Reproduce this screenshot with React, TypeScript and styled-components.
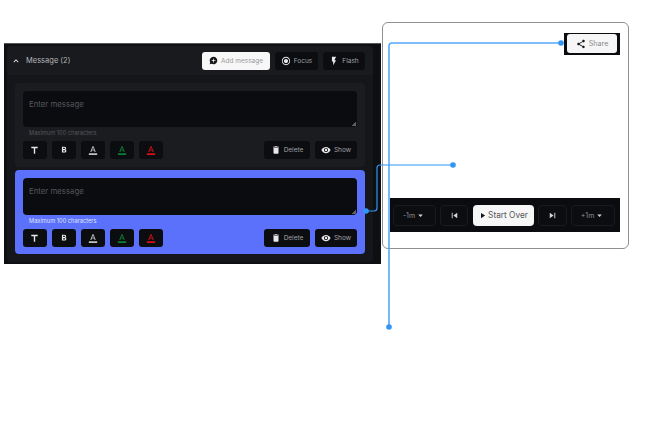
import React from 'react'
import styled, { createGlobalStyle } from 'styled-components'
import {
  MdArrowDropDown,
  MdDelete,
  MdExpandLess,
  MdFlashOn,
  MdFormatBold,
  MdFormatColorText,
  MdPlayArrow,
  MdRadioButtonChecked,
  MdShare,
  MdSkipNext,
  MdSkipPrevious,
  MdTitle,
  MdVisibility,
} from 'react-icons/md'

const GlobalStyle = createGlobalStyle`
  html, body {
    margin: 0;
    padding: 0;
    background: #fff;
    overflow: hidden;
  }
  * {
    box-sizing: border-box;
  }
`

const Page = styled.div`
  position: relative;
  width: 650px;
  height: 422px;
  padding: 22px 0 0 4px;
  display: flex;
  align-items: flex-start;
  gap: 1px;
  font-family: Inter, 'Liberation Sans', sans-serif;
`

const Panel = styled.section`
  width: 377px;
  height: 221px;
  margin-top: 21px;
  padding: 2px 8px 0 3px;
  background: #0e0f12;
  border-top: 1px solid #55565a;
`

const Inner = styled.div`
  height: 216px;
  background: #15161a;
  border-radius: 4px;
`

const Header = styled.header`
  height: 29px;
  padding: 0 8px 0 4px;
  display: flex;
  align-items: center;
  gap: 5px;
  background: #191a1e;
  border-radius: 4px 4px 0 0;
`

const Title = styled.h2`
  margin: 0 auto 0 0;
  display: flex;
  align-items: center;
  gap: 5px;
  color: #b5b6ba;
  font-size: 7.5px;
  font-weight: 400;
`

const Button = styled.button<{ $light?: boolean; $width: number }>`
  width: ${(p) => p.$width}px;
  height: 18px;
  padding: 0;
  display: flex;
  align-items: center;
  justify-content: center;
  gap: 3px;
  border: 0;
  border-radius: 3px;
  background: ${(p) => (p.$light ? '#f7f7f8' : '#0c0d10')};
  color: ${(p) => (p.$light ? '#97989c' : '#a0a1a5')};
  font-family: inherit;
  font-size: 6.5px;
  svg {
    flex: none;
    color: ${(p) => (p.$light ? '#15161a' : '#e8e8ea')};
  }
`

const Messages = styled.div`
  padding: 8px 8px 0;
  display: flex;
  flex-direction: column;
  gap: 3px;
`

const Card = styled.article<{ $active?: boolean }>`
  height: 84px;
  padding: 8px 8px 8px 7.5px;
  border-radius: 4px;
  background: ${(p) => (p.$active ? '#5b70fb' : '#1b1c20')};
`

const Field = styled.div<{ $active?: boolean }>`
  position: relative;
  height: ${(p) => (p.$active ? 37 : 36)}px;
  padding: 9px 6.5px;
  border-radius: 4px;
  background: #0b0c0f;
  color: #55565c;
  font-size: 7.8px;
  line-height: 8px;
`

const Grip = styled.i`
  position: absolute;
  right: 1px;
  bottom: 1px;
  width: 4px;
  height: 4px;
  background: linear-gradient(135deg, transparent 50%, #5f6064 50%);
`

const Hint = styled.div<{ $active?: boolean }>`
  height: 14px;
  padding-left: 6.5px;
  color: ${(p) => (p.$active ? '#dfe3ff' : '#55565c')};
  font-size: 5.7px;
  line-height: 11px;
`

const Tools = styled.div`
  display: flex;
  align-items: center;
  gap: 5px;
`

const Spacer = styled.div`
  flex: 1;
`

const Preview = styled.section`
  width: 247px;
  height: 227px;
  padding: 10px 8px 0 7px;
  border: 1px solid #8f9092;
  border-radius: 6px;
  background: #fff;
  display: flex;
  flex-direction: column;
  justify-content: space-between;
`

const ShareRow = styled.div`
  align-self: flex-end;
  width: 56px;
  height: 22px;
  padding: 1px 3px;
  background: #0b0c0f;
`

const ShareButton = styled.button`
  width: 50px;
  height: 19px;
  padding: 0;
  display: flex;
  align-items: center;
  justify-content: center;
  gap: 3px;
  border: 0;
  border-radius: 3px;
  background: #f6f6f6;
  color: #8a8b8f;
  font-family: inherit;
  font-size: 7.2px;
  svg {
    color: #15161a;
  }
`

const Controls = styled.div`
  height: 34px;
  margin-bottom: 16px;
  padding: 0 5px 0 3px;
  display: flex;
  align-items: center;
  justify-content: space-between;
  background: #0b0c0f;
`

const Control = styled.button<{ $width: number }>`
  width: ${(p) => p.$width}px;
  height: 21px;
  padding: 0;
  display: flex;
  align-items: center;
  justify-content: center;
  border: 1px solid #1a1b1f;
  border-radius: 4px;
  background: #0c0d10;
  color: #8f9094;
  font-family: inherit;
  font-size: 7px;
  svg {
    color: #d5d5d8;
  }
`

const StartOver = styled.button`
  width: 61px;
  height: 21px;
  padding: 0;
  display: flex;
  align-items: center;
  justify-content: center;
  gap: 1px;
  border: 0;
  border-radius: 4px;
  background: #f6f6f6;
  color: #55565a;
  font-family: inherit;
  font-size: 8.3px;
  svg {
    color: #15161a;
  }
`

const Wires = styled.svg`
  position: absolute;
  left: 0;
  top: 0;
  pointer-events: none;
`

const BubbleIcon = () => (
  <svg width="9" height="9" viewBox="0 0 24 24">
    <path
      fill="currentColor"
      d="M12 2a10 10 0 1 1-4.6 18.9L2 22l1.1-5.4A10 10 0 0 1 12 2z"
    />
    <path fill="#f7f7f8" d="M11 7h2v4h4v2h-4v4h-2v-4H7v-2h4z" />
  </svg>
)

const MessageCard = ({ active }: { active?: boolean }) => (
  <Card $active={active}>
    <Field $active={active}>
      Enter message
      <Grip />
    </Field>
    <Hint $active={active}>Maximum 100 characters</Hint>
    <Tools>
      <Button $width={24}>
        <MdTitle size={11} />
      </Button>
      <Button $width={24}>
        <MdFormatBold size={10} />
      </Button>
      <Button $width={24}>
        <MdFormatColorText size={10} style={{ color: '#c4c4c8' }} />
      </Button>
      <Button $width={24}>
        <MdFormatColorText size={10} style={{ color: '#0c7f35' }} />
      </Button>
      <Button $width={24}>
        <MdFormatColorText size={10} style={{ color: '#d80f14' }} />
      </Button>
      <Spacer />
      <Button $width={46}>
        <MdDelete size={10} />
        Delete
      </Button>
      <Button $width={42}>
        <MdVisibility size={10} />
        Show
      </Button>
    </Tools>
  </Card>
)

const App = () => (
  <Page>
    <GlobalStyle />
    <Panel>
      <Inner>
        <Header>
          <Title>
            <MdExpandLess size={10} color="#e8e8ea" />
            Message (2)
          </Title>
          <Button $light $width={68}>
            <BubbleIcon />
            Add message
          </Button>
          <Button $width={43}>
            <MdRadioButtonChecked size={10} />
            Focus
          </Button>
          <Button $width={42}>
            <MdFlashOn size={10} />
            Flash
          </Button>
        </Header>
        <Messages>
          <MessageCard />
          <MessageCard active />
        </Messages>
      </Inner>
    </Panel>
    <Preview>
      <ShareRow>
        <ShareButton>
          <MdShare size={10} />
          Share
        </ShareButton>
      </ShareRow>
      <Controls>
        <Control $width={43}>
          -1m
          <MdArrowDropDown size={11} />
        </Control>
        <Control $width={28}>
          <MdSkipPrevious size={11} />
        </Control>
        <StartOver>
          <MdPlayArrow size={9} />
          Start Over
        </StartOver>
        <Control $width={29}>
          <MdSkipNext size={11} />
        </Control>
        <Control $width={44}>
          +1m
          <MdArrowDropDown size={11} />
        </Control>
      </Controls>
    </Preview>
    <Wires width="650" height="422" viewBox="0 0 650 422" fill="none">
      <path
        d="M389 327V46a3 3 0 0 1 3-3H561"
        stroke="#55a8fb"
        strokeWidth="1.6"
      />
      <path
        d="M366 211H374a3 3 0 0 0 3-3V168a3 3 0 0 1 3-3H453"
        stroke="#2f96f5"
        strokeWidth="1.2"
      />
      <circle cx="389" cy="327" r="2.8" fill="#2f96f5" />
      <circle cx="561" cy="43" r="2.8" fill="#2f96f5" />
      <circle cx="453" cy="165" r="2.8" fill="#2f96f5" />
      <circle cx="366" cy="211" r="2.8" fill="#2f96f5" />
    </Wires>
  </Page>
)

export default App
